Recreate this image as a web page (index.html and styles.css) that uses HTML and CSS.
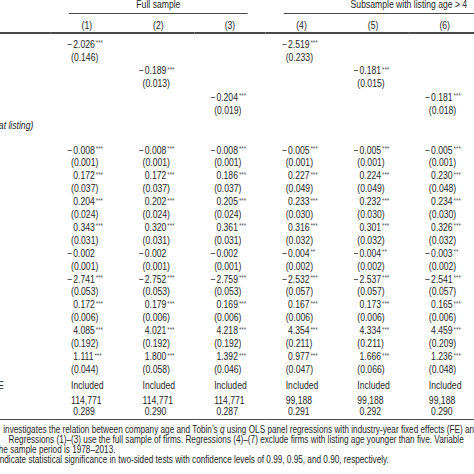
FILE: index.html
```html
<!DOCTYPE html>
<html lang="en">
<head>
<meta charset="utf-8">
<title>Tobin's q and company age</title>
<link rel="stylesheet" href="styles.css">
</head>
<body>
<main class="sheet">
  <div class="tablewrap">
    <table class="reg">
      <colgroup>
        <col class="c-lab">
        <col class="c-num"><col class="c-num"><col class="c-num">
        <col class="c-num"><col class="c-num"><col class="c-num"><col class="c-num">
      </colgroup>
      <tr class="grp">
        <td></td>
        <td colspan="3"><div class="span">Full sample</div></td>
        <td colspan="4"><div class="span">Subsample with listing age &gt; 4</div></td>
      </tr>
      <tr class="hdr">
        <td></td><td>(1)</td><td>(2)</td><td>(3)</td><td>(4)</td><td>(5)</td><td>(6)</td><td>(7)</td>
      </tr>
      <tr class="pair top first">
        <td class="lab">ln(Age)</td>
        <td><div class="co"><i class="m">−</i>2.026<sup>***</sup></div><div class="se">(0.146)</div></td>
        <td></td><td></td>
        <td><div class="co"><i class="m">−</i>2.519<sup>***</sup></div><div class="se">(0.233)</div></td>
        <td></td><td></td><td></td>
      </tr>
      <tr class="pair top">
        <td class="lab">Age</td>
        <td></td>
        <td><div class="co"><i class="m">−</i>0.189<sup>***</sup></div><div class="se">(0.013)</div></td>
        <td></td><td></td>
        <td><div class="co"><i class="m">−</i>0.181<sup>***</sup></div><div class="se">(0.015)</div></td>
        <td></td><td></td>
      </tr>
      <tr class="pair top">
        <td class="lab">Listing age</td>
        <td></td><td></td>
        <td><div class="co"><i class="m">−</i>0.204<sup>***</sup></div><div class="se">(0.019)</div></td>
        <td></td><td></td>
        <td><div class="co"><i class="m">−</i>0.181<sup>***</sup></div><div class="se">(0.018)</div></td>
        <td></td>
      </tr>
      <tr class="sub">
        <td class="lab it">(Company age at listing)</td>
        <td></td><td></td><td></td><td></td><td></td><td></td><td></td>
      </tr>
      <tr class="pair">
        <td class="lab">Size</td>
        <td><div class="co"><i class="m">−</i>0.008<sup>***</sup></div><div class="se">(0.001)</div></td>
        <td><div class="co"><i class="m">−</i>0.008<sup>***</sup></div><div class="se">(0.001)</div></td>
        <td><div class="co"><i class="m">−</i>0.008<sup>***</sup></div><div class="se">(0.001)</div></td>
        <td><div class="co"><i class="m">−</i>0.005<sup>***</sup></div><div class="se">(0.001)</div></td>
        <td><div class="co"><i class="m">−</i>0.005<sup>***</sup></div><div class="se">(0.001)</div></td>
        <td><div class="co"><i class="m">−</i>0.005<sup>***</sup></div><div class="se">(0.001)</div></td>
        <td></td>
      </tr>
      <tr class="pair">
        <td class="lab">ROA</td>
        <td><div class="co"><i class="m"></i>0.172<sup>***</sup></div><div class="se">(0.037)</div></td>
        <td><div class="co"><i class="m"></i>0.172<sup>***</sup></div><div class="se">(0.037)</div></td>
        <td><div class="co"><i class="m"></i>0.186<sup>***</sup></div><div class="se">(0.037)</div></td>
        <td><div class="co"><i class="m"></i>0.227<sup>***</sup></div><div class="se">(0.049)</div></td>
        <td><div class="co"><i class="m"></i>0.224<sup>***</sup></div><div class="se">(0.049)</div></td>
        <td><div class="co"><i class="m"></i>0.230<sup>***</sup></div><div class="se">(0.048)</div></td>
        <td></td>
      </tr>
      <tr class="pair">
        <td class="lab">Growth</td>
        <td><div class="co"><i class="m"></i>0.204<sup>***</sup></div><div class="se">(0.024)</div></td>
        <td><div class="co"><i class="m"></i>0.202<sup>***</sup></div><div class="se">(0.024)</div></td>
        <td><div class="co"><i class="m"></i>0.205<sup>***</sup></div><div class="se">(0.024)</div></td>
        <td><div class="co"><i class="m"></i>0.233<sup>***</sup></div><div class="se">(0.030)</div></td>
        <td><div class="co"><i class="m"></i>0.232<sup>***</sup></div><div class="se">(0.030)</div></td>
        <td><div class="co"><i class="m"></i>0.234<sup>***</sup></div><div class="se">(0.030)</div></td>
        <td></td>
      </tr>
      <tr class="pair">
        <td class="lab">R&amp;D</td>
        <td><div class="co"><i class="m"></i>0.343<sup>***</sup></div><div class="se">(0.031)</div></td>
        <td><div class="co"><i class="m"></i>0.320<sup>***</sup></div><div class="se">(0.031)</div></td>
        <td><div class="co"><i class="m"></i>0.361<sup>***</sup></div><div class="se">(0.031)</div></td>
        <td><div class="co"><i class="m"></i>0.316<sup>***</sup></div><div class="se">(0.032)</div></td>
        <td><div class="co"><i class="m"></i>0.301<sup>***</sup></div><div class="se">(0.032)</div></td>
        <td><div class="co"><i class="m"></i>0.326<sup>***</sup></div><div class="se">(0.032)</div></td>
        <td></td>
      </tr>
      <tr class="pair">
        <td class="lab">Risk</td>
        <td><div class="co"><i class="m">−</i>0.002</div><div class="se">(0.001)</div></td>
        <td><div class="co"><i class="m">−</i>0.002</div><div class="se">(0.001)</div></td>
        <td><div class="co"><i class="m">−</i>0.002</div><div class="se">(0.001)</div></td>
        <td><div class="co"><i class="m">−</i>0.004<sup>**</sup></div><div class="se">(0.002)</div></td>
        <td><div class="co"><i class="m">−</i>0.004<sup>**</sup></div><div class="se">(0.002)</div></td>
        <td><div class="co"><i class="m">−</i>0.003<sup>**</sup></div><div class="se">(0.002)</div></td>
        <td></td>
      </tr>
      <tr class="pair">
        <td class="lab">Leverage</td>
        <td><div class="co"><i class="m">−</i>2.741<sup>***</sup></div><div class="se">(0.053)</div></td>
        <td><div class="co"><i class="m">−</i>2.752<sup>***</sup></div><div class="se">(0.053)</div></td>
        <td><div class="co"><i class="m">−</i>2.759<sup>***</sup></div><div class="se">(0.053)</div></td>
        <td><div class="co"><i class="m">−</i>2.532<sup>***</sup></div><div class="se">(0.057)</div></td>
        <td><div class="co"><i class="m">−</i>2.537<sup>***</sup></div><div class="se">(0.057)</div></td>
        <td><div class="co"><i class="m">−</i>2.541<sup>***</sup></div><div class="se">(0.057)</div></td>
        <td></td>
      </tr>
      <tr class="pair">
        <td class="lab">Cash</td>
        <td><div class="co"><i class="m"></i>0.172<sup>***</sup></div><div class="se">(0.006)</div></td>
        <td><div class="co"><i class="m"></i>0.179<sup>***</sup></div><div class="se">(0.006)</div></td>
        <td><div class="co"><i class="m"></i>0.169<sup>***</sup></div><div class="se">(0.006)</div></td>
        <td><div class="co"><i class="m"></i>0.167<sup>***</sup></div><div class="se">(0.006)</div></td>
        <td><div class="co"><i class="m"></i>0.173<sup>***</sup></div><div class="se">(0.006)</div></td>
        <td><div class="co"><i class="m"></i>0.165<sup>***</sup></div><div class="se">(0.006)</div></td>
        <td></td>
      </tr>
      <tr class="pair">
        <td class="lab">Capex</td>
        <td><div class="co"><i class="m"></i>4.085<sup>***</sup></div><div class="se">(0.192)</div></td>
        <td><div class="co"><i class="m"></i>4.021<sup>***</sup></div><div class="se">(0.192)</div></td>
        <td><div class="co"><i class="m"></i>4.218<sup>***</sup></div><div class="se">(0.192)</div></td>
        <td><div class="co"><i class="m"></i>4.354<sup>***</sup></div><div class="se">(0.211)</div></td>
        <td><div class="co"><i class="m"></i>4.334<sup>***</sup></div><div class="se">(0.211)</div></td>
        <td><div class="co"><i class="m"></i>4.459<sup>***</sup></div><div class="se">(0.209)</div></td>
        <td></td>
      </tr>
      <tr class="pair">
        <td class="lab">Constant</td>
        <td><div class="co"><i class="m"></i>1.111<sup>***</sup></div><div class="se">(0.044)</div></td>
        <td><div class="co"><i class="m"></i>1.800<sup>***</sup></div><div class="se">(0.058)</div></td>
        <td><div class="co"><i class="m"></i>1.392<sup>***</sup></div><div class="se">(0.046)</div></td>
        <td><div class="co"><i class="m"></i>0.977<sup>***</sup></div><div class="se">(0.047)</div></td>
        <td><div class="co"><i class="m"></i>1.666<sup>***</sup></div><div class="se">(0.066)</div></td>
        <td><div class="co"><i class="m"></i>1.236<sup>***</sup></div><div class="se">(0.048)</div></td>
        <td></td>
      </tr>
      <tr class="inc">
        <td class="lab">Industry-year FE</td>
        <td><div class="se">Included</div></td>
        <td><div class="se">Included</div></td>
        <td><div class="se">Included</div></td>
        <td><div class="se">Included</div></td>
        <td><div class="se">Included</div></td>
        <td><div class="se">Included</div></td>
        <td><div class="se">Included</div></td>
      </tr>
      <tr class="obs">
        <td class="lab">Observations</td>
        <td><div class="se">114,771</div></td>
        <td><div class="se">114,771</div></td>
        <td><div class="se">114,771</div></td>
        <td><div class="se">99,188</div></td>
        <td><div class="se">99,188</div></td>
        <td><div class="se">99,188</div></td>
        <td></td>
      </tr>
      <tr class="rsq">
        <td class="lab">Adjusted R²</td>
        <td><div class="co"><i class="m"></i>0.289</div></td>
        <td><div class="co"><i class="m"></i>0.290</div></td>
        <td><div class="co"><i class="m"></i>0.287</div></td>
        <td><div class="co"><i class="m"></i>0.291</div></td>
        <td><div class="co"><i class="m"></i>0.292</div></td>
        <td><div class="co"><i class="m"></i>0.290</div></td>
        <td></td>
      </tr>
    </table>
  </div>
  <div class="notes">
    <div class="nl n1">investigates the relation between company age and Tobin’s <i>q</i> using OLS panel regressions with industry-year fixed effects (FE) and standard errors</div>
    <div class="nl n2">Regressions (1)–(3) use the full sample of firms. Regressions (4)–(7) exclude firms with listing age younger than five. Variable</div>
    <div class="nl n3">The sample period is 1978–2013.</div>
    <div class="nl n4">indicate statistical significance in two-sided tests with confidence levels of 0.99, 0.95, and 0.90, respectively.</div>
  </div>
</main>
</body>
</html>
```
FILE: styles.css
```css
html, body {
  margin: 0;
  padding: 0;
  overflow: hidden;
  background: #ffffff;
}
body {
  width: 474px;
  height: 474px;
  font-family: "Liberation Sans", Arial, sans-serif;
  font-size: 10.5px;
  color: #262626;
}
/* The original typeface is a condensed grotesque; Liberation Sans is
   narrowed horizontally to the same set width. All horizontal sizes
   below are in the unscaled coordinate space (x / 0.82). */
.sheet {
  width: 578px;
  height: 474px;
  overflow: hidden;
  transform: scaleX(0.82);
  transform-origin: 0 0;
}
.tablewrap {
  margin-left: -73.2px;
  width: 746.4px;
}
.reg {
  border-collapse: separate;
  border-spacing: 0;
  table-layout: fixed;
  width: 746.4px;
}
.c-lab { width: 135.4px; }
.c-num { width: 87.28px; }
.reg td {
  padding: 0;
  vertical-align: top;
  white-space: nowrap;
  text-align: left;
}
.lab { overflow: hidden; }
.it { font-style: italic; }

/* group header */
.grp td { line-height: 9px; text-align: center; }
.span {
  margin: 0 22px;
  padding-bottom: 3.5px;
  border-bottom: 1px solid #4a4a4a;
  text-align: center;
}
/* column numbers */
.hdr td {
  padding-top: 5px;
  line-height: 13px;
  text-align: center;
  border-bottom: 2px solid #4a4a4a;
}
.pair td { line-height: 12.9px; }
.pair.top td { line-height: 13px; padding-bottom: 0.5px; }
.pair.first td { padding-top: 4px; }
.sub td { line-height: 13px; padding-top: 2px; padding-bottom: 11.5px; }

.co { padding-left: 19.5px; }
.se { padding-left: 24.4px; }
.m {
  display: inline-block;
  width: 7.6px;
  font-style: normal;
}
sup {
  font-size: 7.5px;
  line-height: 0;
  vertical-align: 2.5px;
  margin-left: 1.2px;
  color: #555;
}
.inc td { padding-top: 3.3px; line-height: 13px; }
.obs td { padding-top: 2px; line-height: 12px; }
.rsq td {
  line-height: 11px;
  padding-bottom: 1.5px;
  border-bottom: 1.5px solid #4a4a4a;
}

.notes {
  padding-top: 5px;
  font-size: 10px;
  line-height: 10px;
}
.nl { white-space: nowrap; }
.n1 { padding-left: 4px; }
.n2 { padding-left: 10.5px; }
.n3 { text-indent: -7.6px; }
.n4 { text-indent: -2.6px; }
```
